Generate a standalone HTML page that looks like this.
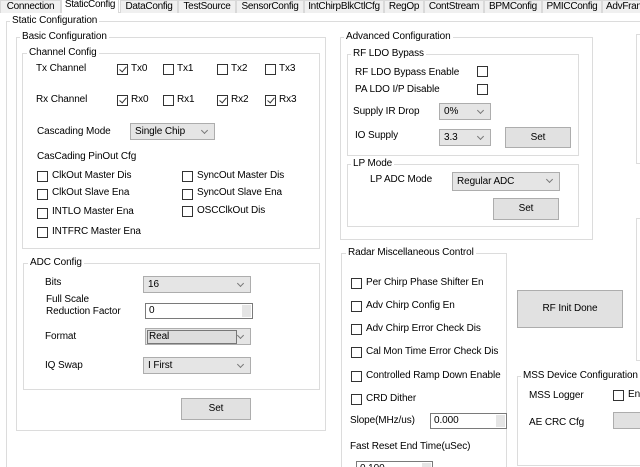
<!DOCTYPE html>
<html style="overflow:hidden;width:640px;height:467px"><head><meta charset="utf-8"><style>
*{box-sizing:border-box;margin:0;padding:0}
html,body{overflow:hidden}
body{width:640px;height:467px;background:#fff;font-family:"Liberation Sans",Arial,sans-serif;font-size:10px;color:#000;position:relative;letter-spacing:-0.1px}
.a{position:absolute;white-space:nowrap}
.f{position:absolute;border:1px solid #dcdcdc}
.lg{position:absolute;background:#fff;padding:0 2px;white-space:nowrap;line-height:12px}
.cb{position:absolute;width:11px;height:11px;border:1px solid #333;background:#fff}
.cb.c::after{content:"";position:absolute;left:3px;top:0px;width:3px;height:6px;border:solid #333;border-width:0 1px 1px 0;transform:rotate(40deg)}
.sel{position:absolute;background:#e5e5e5;border:1px solid #adadad;padding-left:4px;line-height:15px}
.sel::after{content:"";position:absolute;right:7px;top:4px;width:4px;height:4px;border:solid #777;border-width:0 1px 1px 0;transform:rotate(45deg)}
.btn{position:absolute;background:#e1e1e1;border:1px solid #adadad;text-align:center}
.spin{position:absolute;background:#fff;border:1px solid #7a7a7a;padding-left:3px;line-height:14px}
.spin::after{content:"";position:absolute;right:1px;top:1px;width:9px;height:12px;background:#e5e5e5}
.tab{position:absolute;top:0;height:13px;line-height:12px;border:1px solid #d9d9d9;border-bottom:none;background:#f0f0f0;text-align:center;font-size:10px;overflow:hidden;letter-spacing:-0.3px}
</style></head><body>
<div class="a" style="left:0;top:12px;width:640px;border-top:1px solid #d9d9d9"></div>
<div class="tab" style="left:0;width:61px">Connection</div>
<div class="tab" style="left:61px;top:-2px;height:15px;width:58px;background:#fff;line-height:11px">StaticConfig</div>
<div class="tab" style="left:120px;width:58px">DataConfig</div>
<div class="tab" style="left:178px;width:58px">TestSource</div>
<div class="tab" style="left:236px;width:68px">SensorConfig</div>
<div class="tab" style="left:304px;width:80px">IntChirpBlkCtlCfg</div>
<div class="tab" style="left:384px;width:40px">RegOp</div>
<div class="tab" style="left:424px;width:60px">ContStream</div>
<div class="tab" style="left:484px;width:58px">BPMConfig</div>
<div class="tab" style="left:542px;width:60px">PMICConfig</div>
<div class="tab" style="left:602px;width:50px;text-align:left;padding-left:3px">AdvFrame</div>

<div class="f" style="left:6px;top:21px;width:640px;height:460px"></div>
<div class="lg" style="left:10px;top:15px">Static Configuration</div>

<div class="f" style="left:16px;top:37px;width:310px;height:394px"></div>
<div class="lg" style="left:20px;top:31px">Basic Configuration</div>

<div class="f" style="left:22px;top:53px;width:298px;height:196px"></div>
<div class="lg" style="left:27px;top:47px">Channel Config</div>
<div class="a" style="left:36px;top:63px">Tx Channel</div>
<div class="cb c" style="left:117px;top:64px"></div><div class="a" style="left:131px;top:63px">Tx0</div>
<div class="cb" style="left:163px;top:64px"></div><div class="a" style="left:177px;top:63px">Tx1</div>
<div class="cb" style="left:217px;top:64px"></div><div class="a" style="left:231px;top:63px">Tx2</div>
<div class="cb" style="left:265px;top:64px"></div><div class="a" style="left:279px;top:63px">Tx3</div>
<div class="a" style="left:36px;top:94px">Rx Channel</div>
<div class="cb c" style="left:117px;top:95px"></div><div class="a" style="left:131px;top:94px">Rx0</div>
<div class="cb" style="left:163px;top:95px"></div><div class="a" style="left:177px;top:94px">Rx1</div>
<div class="cb c" style="left:217px;top:95px"></div><div class="a" style="left:231px;top:94px">Rx2</div>
<div class="cb c" style="left:265px;top:95px"></div><div class="a" style="left:279px;top:94px">Rx3</div>
<div class="a" style="left:37px;top:126px">Cascading Mode</div>
<div class="sel" style="left:130px;top:123px;width:85px;height:17px">Single Chip</div>
<div class="a" style="left:37px;top:151px">CasCading PinOut Cfg</div>
<div class="cb" style="left:37px;top:171px"></div><div class="a" style="left:52px;top:170px">ClkOut Master Dis</div>
<div class="cb" style="left:37px;top:189px"></div><div class="a" style="left:52px;top:187px">ClkOut Slave Ena</div>
<div class="cb" style="left:37px;top:208px"></div><div class="a" style="left:52px;top:206px">INTLO Master Ena</div>
<div class="cb" style="left:37px;top:227px"></div><div class="a" style="left:52px;top:226px">INTFRC Master Ena</div>
<div class="cb" style="left:182px;top:171px"></div><div class="a" style="left:197px;top:170px">SyncOut Master Dis</div>
<div class="cb" style="left:182px;top:189px"></div><div class="a" style="left:197px;top:187px">SyncOut Slave Ena</div>
<div class="cb" style="left:182px;top:206px"></div><div class="a" style="left:197px;top:205px">OSCClkOut Dis</div>

<div class="f" style="left:23px;top:263px;width:297px;height:127px"></div>
<div class="lg" style="left:28px;top:257px">ADC Config</div>
<div class="a" style="left:45px;top:277px">Bits</div>
<div class="sel" style="left:143px;top:276px;width:108px;height:17px">16</div>
<div class="a" style="left:46px;top:294px;line-height:12px">Full Scale<br>Reduction Factor</div>
<div class="spin" style="left:145px;top:303px;width:108px;height:16px">0</div>
<div class="a" style="left:45px;top:331px">Format</div>
<div class="sel" style="left:145px;top:328px;width:106px;height:17px;padding:1px"><span style="display:block;width:90px;border:1px solid #777;background:#ddd;line-height:12px;padding-left:1px">Real</span></div>
<div class="a" style="left:45px;top:360px">IQ Swap</div>
<div class="sel" style="left:143px;top:357px;width:108px;height:17px">I First</div>
<div class="btn" style="left:181px;top:398px;width:70px;height:22px;line-height:20px">Set</div>

<div class="f" style="left:340px;top:37px;width:253px;height:203px"></div>
<div class="lg" style="left:344px;top:31px">Advanced Configuration</div>
<div class="f" style="left:347px;top:54px;width:232px;height:102px"></div>
<div class="lg" style="left:351px;top:48px">RF LDO Bypass</div>
<div class="a" style="left:355px;top:67px">RF LDO Bypass Enable</div>
<div class="cb" style="left:477px;top:66px"></div>
<div class="a" style="left:355px;top:84px">PA LDO I/P Disable</div>
<div class="cb" style="left:477px;top:84px"></div>
<div class="a" style="left:353px;top:106px">Supply IR Drop</div>
<div class="sel" style="left:439px;top:103px;width:52px;height:17px">0%</div>
<div class="a" style="left:355px;top:130px">IO Supply</div>
<div class="sel" style="left:439px;top:129px;width:52px;height:17px">3.3</div>
<div class="btn" style="left:505px;top:127px;width:66px;height:21px;line-height:19px">Set</div>
<div class="f" style="left:347px;top:164px;width:232px;height:63px"></div>
<div class="lg" style="left:351px;top:158px">LP Mode</div>
<div class="a" style="left:370px;top:174px">LP ADC Mode</div>
<div class="sel" style="left:452px;top:172px;width:108px;height:19px;line-height:17px">Regular ADC</div>
<div class="btn" style="left:493px;top:198px;width:66px;height:22px;line-height:20px">Set</div>

<div class="f" style="left:636px;top:34px;width:20px;height:130px"></div>
<div class="f" style="left:636px;top:218px;width:20px;height:143px"></div>

<div class="f" style="left:341px;top:253px;width:166px;height:230px"></div>
<div class="lg" style="left:346px;top:247px">Radar Miscellaneous Control</div>
<div class="cb" style="left:351px;top:278px"></div><div class="a" style="left:366px;top:277px">Per Chirp Phase Shifter En</div>
<div class="cb" style="left:351px;top:301px"></div><div class="a" style="left:366px;top:300px">Adv Chirp Config En</div>
<div class="cb" style="left:351px;top:324px"></div><div class="a" style="left:366px;top:323px">Adv Chirp Error Check Dis</div>
<div class="cb" style="left:351px;top:347px"></div><div class="a" style="left:366px;top:346px">Cal Mon Time Error Check Dis</div>
<div class="cb" style="left:351px;top:371px"></div><div class="a" style="left:366px;top:370px">Controlled Ramp Down Enable</div>
<div class="cb" style="left:351px;top:394px"></div><div class="a" style="left:366px;top:393px">CRD Dither</div>
<div class="a" style="left:350px;top:415px">Slope(MHz/us)</div>
<div class="spin" style="left:430px;top:413px;width:77px;height:16px">0.000</div>
<div class="a" style="left:350px;top:441px">Fast Reset End Time(uSec)</div>
<div class="spin" style="left:356px;top:461px;width:77px;height:16px">0.100</div>

<div class="btn" style="left:517px;top:290px;width:106px;height:38px;line-height:36px">RF Init Done</div>

<div class="f" style="left:517px;top:376px;width:140px;height:90px"></div>
<div class="lg" style="left:521px;top:370px">MSS Device Configuration</div>
<div class="a" style="left:529px;top:390px">MSS Logger</div>
<div class="cb" style="left:613px;top:390px"></div><div class="a" style="left:628px;top:389px">En</div>
<div class="a" style="left:529px;top:417px">AE CRC Cfg</div>
<div class="btn" style="left:613px;top:412px;width:40px;height:17px"></div>
</body></html>
